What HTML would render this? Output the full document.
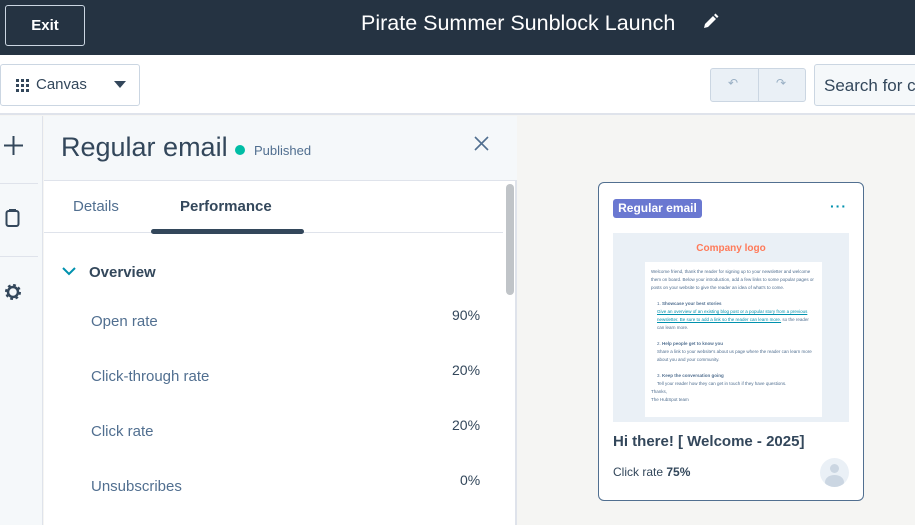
<!DOCTYPE html>
<html><head><style>
*{box-sizing:border-box;margin:0;padding:0}
body{width:915px;height:525px;overflow:hidden;font-family:"Liberation Sans",sans-serif;background:#f5f5f3;position:relative;color:#33475b}
.a{position:absolute}
</style></head><body>
<div class="a" style="left:0;top:0;width:915px;height:55px;background:#253342"></div>
<div class="a" style="left:5px;top:5px;width:80px;height:41px;border:1px solid #cbd6e2;border-radius:3px;color:#fff;font-weight:bold;font-size:15px;text-align:center;line-height:39px">Exit</div>
<div class="a" style="left:361px;top:11px;color:#fff;font-size:21.5px">Pirate Summer Sunblock Launch</div>
<svg class="a" style="left:702px;top:13px" width="17" height="17" viewBox="0 0 17 17"><path d="M2 15l1-4 8-8 3 3-8 8z M12 2l1.5-1.5 3 3L15 5z" fill="#fff"/></svg>
<div class="a" style="left:0;top:55px;width:915px;height:60px;background:#fff;border-bottom:2px solid #dfe3eb"></div>
<div class="a" style="left:0;top:64px;width:140px;height:42px;border:1px solid #cbd6e2;border-radius:3px;background:#fff"></div>
<svg class="a" style="left:16px;top:79px" width="13" height="13"><g fill="#33475b"><rect x="0" y="0" width="3" height="3"/><rect x="5" y="0" width="3" height="3"/><rect x="10" y="0" width="3" height="3"/><rect x="0" y="5" width="3" height="3"/><rect x="5" y="5" width="3" height="3"/><rect x="10" y="5" width="3" height="3"/><rect x="0" y="10" width="3" height="3"/><rect x="5" y="10" width="3" height="3"/><rect x="10" y="10" width="3" height="3"/></g></svg>
<div class="a" style="left:36px;top:76px;font-size:15px">Canvas</div>
<svg class="a" style="left:114px;top:81px" width="12" height="7"><path d="M0 0h12L6 7z" fill="#33475b"/></svg>
<div class="a" style="left:710px;top:68px;width:96px;height:34px;background:#eaf0f6;border:1px solid #cbd6e2;border-radius:3px"></div>
<div class="a" style="left:758px;top:68px;width:1px;height:34px;background:#cbd6e2"></div>
<div class="a" style="left:728px;top:76px;font-size:12px;color:#99afc4">↶</div>
<div class="a" style="left:776px;top:76px;font-size:12px;color:#99afc4">↷</div>
<div class="a" style="left:814px;top:64px;width:110px;height:42px;background:#f5f8fa;border:1px solid #cbd6e2;border-radius:3px"></div>
<div class="a" style="left:824px;top:76px;font-size:17px;white-space:nowrap">Search for c</div>
<div class="a" style="left:0;top:116px;width:43px;height:409px;background:#f5f8fa;border-right:1px solid #dfe3eb"></div>
<div class="a" style="left:0;top:183px;width:38px;height:1px;background:#dfe3eb"></div>
<div class="a" style="left:0;top:256px;width:38px;height:1px;background:#dfe3eb"></div>
<svg class="a" style="left:4px;top:136px" width="19" height="19"><path d="M9.5 0v19M0 9.5h19" stroke="#33475b" stroke-width="2"/></svg>
<svg class="a" style="left:5px;top:208px" width="15" height="20"><rect x="1.5" y="3" width="12" height="15" rx="2" fill="none" stroke="#33475b" stroke-width="2"/><rect x="4" y="1" width="7" height="3" fill="#33475b"/></svg>
<svg class="a" style="left:3px;top:282px" width="20" height="20" viewBox="0 0 20 20"><circle cx="10" cy="10" r="6" fill="none" stroke="#33475b" stroke-width="4" stroke-dasharray="2.4 2.3"/><circle cx="10" cy="10" r="5" fill="none" stroke="#33475b" stroke-width="2.5"/></svg>
<div class="a" style="left:44px;top:116px;width:473px;height:409px;background:#fff;border-right:2px solid #dfe3eb"></div>
<div class="a" style="left:44px;top:116px;width:473px;height:65px;background:#f5f8fa;border-bottom:1px solid #dfe3eb"></div>
<div class="a" style="left:61px;top:132px;font-size:27px">Regular email</div>
<div class="a" style="left:235px;top:145px;width:10px;height:10px;border-radius:50%;background:#00bda5"></div>
<div class="a" style="left:254px;top:143px;font-size:13px;color:#516f90">Published</div>
<svg class="a" style="left:474px;top:136px" width="15" height="15"><path d="M1 1l13 13M14 1L1 14" stroke="#516f90" stroke-width="1.6"/></svg>
<div class="a" style="left:44px;top:232px;width:459px;height:1px;background:#dfe3eb"></div>
<div class="a" style="left:73px;top:198px;font-size:15px;color:#516f90">Details</div>
<div class="a" style="left:180px;top:198px;font-size:15px;font-weight:bold">Performance</div>
<div class="a" style="left:151px;top:229px;width:153px;height:5px;border-radius:3px;background:#33475b"></div>
<div class="a" style="left:506px;top:184px;width:8px;height:111px;border-radius:4px;background:#c0c4c8"></div>
<svg class="a" style="left:62px;top:267px" width="14" height="9"><path d="M1 1l6 6 6-6" fill="none" stroke="#0091ae" stroke-width="2"/></svg>
<div class="a" style="left:89px;top:264px;font-size:15px;font-weight:bold">Overview</div>
<div class="a" style="left:91px;top:313px;font-size:15px;color:#516f90">Open rate</div>
<div class="a" style="left:452px;top:307px;font-size:14px">90%</div>
<div class="a" style="left:91px;top:368px;font-size:15px;color:#516f90">Click-through rate</div>
<div class="a" style="left:452px;top:362px;font-size:14px">20%</div>
<div class="a" style="left:91px;top:423px;font-size:15px;color:#516f90">Click rate</div>
<div class="a" style="left:452px;top:417px;font-size:14px">20%</div>
<div class="a" style="left:91px;top:478px;font-size:15px;color:#516f90">Unsubscribes</div>
<div class="a" style="left:460px;top:472px;font-size:14px">0%</div>
<div class="a" style="left:598px;top:182px;width:266px;height:319px;background:#fff;border:1px solid #516f90;border-radius:6px"></div>
<div class="a" style="left:613px;top:199px;width:89px;height:19px;background:#6a78d1;border-radius:3px;color:#fff;font-size:12px;font-weight:bold;text-align:center;line-height:19px">Regular email</div>
<div class="a" style="left:830px;top:198px;font-size:14px;color:#0091ae;font-weight:bold;letter-spacing:1px">···</div>
<div class="a" style="left:613px;top:233px;width:236px;height:189px;background:#eaf0f6"></div>
<div class="a" style="left:613px;top:243px;width:236px;text-align:center;color:#ff7a59;font-size:10px;font-weight:bold">Company logo</div>
<div class="a" style="left:645px;top:262px;width:177px;height:155px;background:#fff;font-size:4.5px;line-height:8px;color:#516f90;padding:6px 6px">Welcome friend, thank the reader for signing up to your newsletter and welcome them on board. Below your introduction, add a few links to some popular pages or posts on your website to give the reader an idea of what's to come.<br><br><div style="padding-left:6px">1. <b>Showcase your best stories</b><br><span style="color:#0091ae;text-decoration:underline">Give an overview of an existing blog post or a popular story from a previous newsletter. Be sure to add a link so the reader can learn more.</span> so the reader can learn more.<br><br>2. <b>Help people get to know you</b><br>Share a link to your website's about us page where the reader can learn more about you and your community.<br><br>3. <b>Keep the conversation going</b><br>Tell your reader how they can get in touch if they have questions.</div>Thanks,<br>The HubSpot team</div>
<div class="a" style="left:613px;top:433px;font-size:15px;font-weight:bold">Hi there! [ Welcome - 2025]</div>
<div class="a" style="left:613px;top:465px;font-size:12px">Click rate <b>75%</b></div>
<div class="a" style="left:820px;top:458px;width:29px;height:29px;border-radius:50%;background:#eaf0f6;overflow:hidden"><div class="a" style="left:10px;top:6px;width:9px;height:9px;border-radius:50%;background:#cbd6e2"></div><div class="a" style="left:5px;top:17px;width:19px;height:14px;border-radius:50%;background:#cbd6e2"></div></div>
</body></html>
